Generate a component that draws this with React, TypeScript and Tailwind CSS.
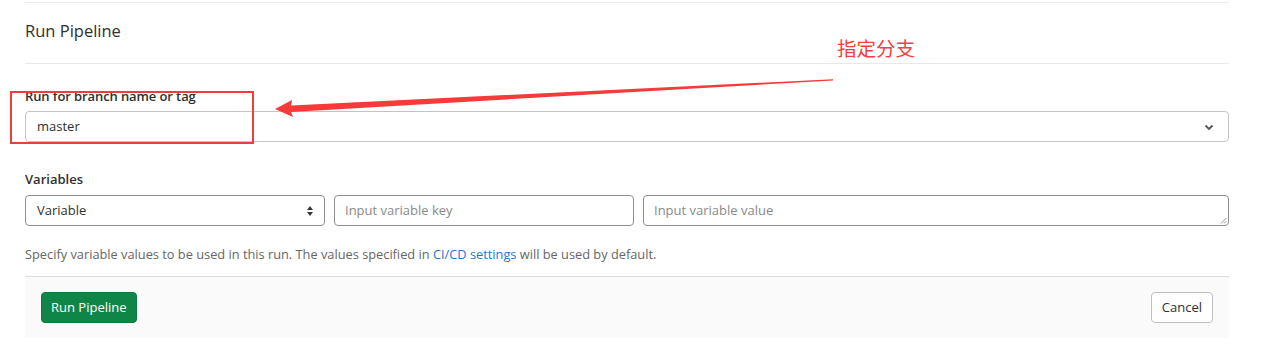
import React from "react";

const font = { fontFamily: '"Open Sans", "Noto Sans", sans-serif' };

export default function App() {
  return (
    <div className="relative w-[1280px] h-[350px] overflow-hidden bg-white text-[#303030]" style={font}>
      <div className="ml-[25px] w-[1204px] pt-[2px]">
        <div className="border-t border-[#ececec]" />
        <div className="h-[61px] flex items-center border-b border-[#e8e8e8]">
          <h3 className="text-[16.5px] leading-[24px] font-normal text-[#303030] -mt-[5px]">Run Pipeline</h3>
        </div>
        <div className="mt-[22px]">
          <label className="block text-[13px] leading-[20px] font-semibold tracking-[-0.1px] mb-[5px]">Run for branch name or tag</label>
          <div className="h-[31px] border border-[#c4c4c4] rounded-[4px] flex items-center justify-between pl-[11px] pr-[14px] text-[13px]">
            <span>master</span>
            <svg width="10" height="7" viewBox="0 0 10 7" className="mt-[1px]">
              <path d="M1.5 1.5 L5 5 L8.5 1.5" stroke="#555" strokeWidth="1.8" fill="none" />
            </svg>
          </div>
        </div>
        <div className="mt-[27px]">
          <label className="block text-[13px] leading-[20px] font-semibold mb-[6px]">Variables</label>
          <div className="flex gap-[9px] h-[31px] text-[13px]">
            <div className="w-[300px] border border-[#8f8f8f] rounded-[4px] flex items-center justify-between pl-[11px] pr-[10px]">
              <span>Variable</span>
              <svg width="8" height="12" viewBox="0 0 8 12">
                <path d="M4 1 L7 5 L1 5 Z" fill="#333" />
                <path d="M4 11 L7 7 L1 7 Z" fill="#333" />
              </svg>
            </div>
            <div className="w-[300px] border border-[#8f8f8f] rounded-[4px] flex items-center pl-[10px] text-[#8a8a8a]">
              Input variable key
            </div>
            <div className="relative flex-1 border border-[#8f8f8f] rounded-[4px] flex items-center pl-[10px] text-[#8a8a8a]">
              Input variable value
              <svg width="7" height="7" viewBox="0 0 7 7" className="absolute right-[1px] bottom-[1px]">
                <path d="M6.5 1 L1 6.5 M6.5 4 L4 6.5" stroke="#888" strokeWidth="0.9" />
              </svg>
            </div>
          </div>
          <p className="mt-[20px] text-[12.8px] leading-[16px] text-[#666]">
            Specify variable values to be used in this run. The values specified in{" "}
            <span className="text-[#1f75cb]">CI/CD settings</span> will be used by default.
          </p>
        </div>
        <div className="mt-[14px] border-t border-[#dbdbdb] bg-[#fafafa] h-[62px] flex items-center justify-between px-[16px]">
          <button className="h-[31px] px-[9px] rounded-[4px] bg-[#108548] text-white text-[13px] border border-[#0d7a40]">
            Run Pipeline
          </button>
          <button className="h-[31px] px-[10px] rounded-[4px] bg-white text-[#303030] text-[13px] border border-[#bfbfbf]">
            Cancel
          </button>
        </div>
      </div>

      <div className="absolute left-[10px] top-[91px] w-[244px] h-[53px] border-2 border-[#f03c3c]" />
      <svg className="absolute left-0 top-0" width="1280" height="350">
        <polygon points="275,109 292,100 291,105.5 833,79.2 833,80.4 291,112 293,117" fill="#f53a3a" />
      </svg>
      <div
        className="absolute left-[837px] top-[35px] text-[19.5px] leading-[26px] text-[#f54040]"
        style={{ fontFamily: '"Noto Sans CJK SC", sans-serif' }}
      >
        指定分支
      </div>
    </div>
  );
}
